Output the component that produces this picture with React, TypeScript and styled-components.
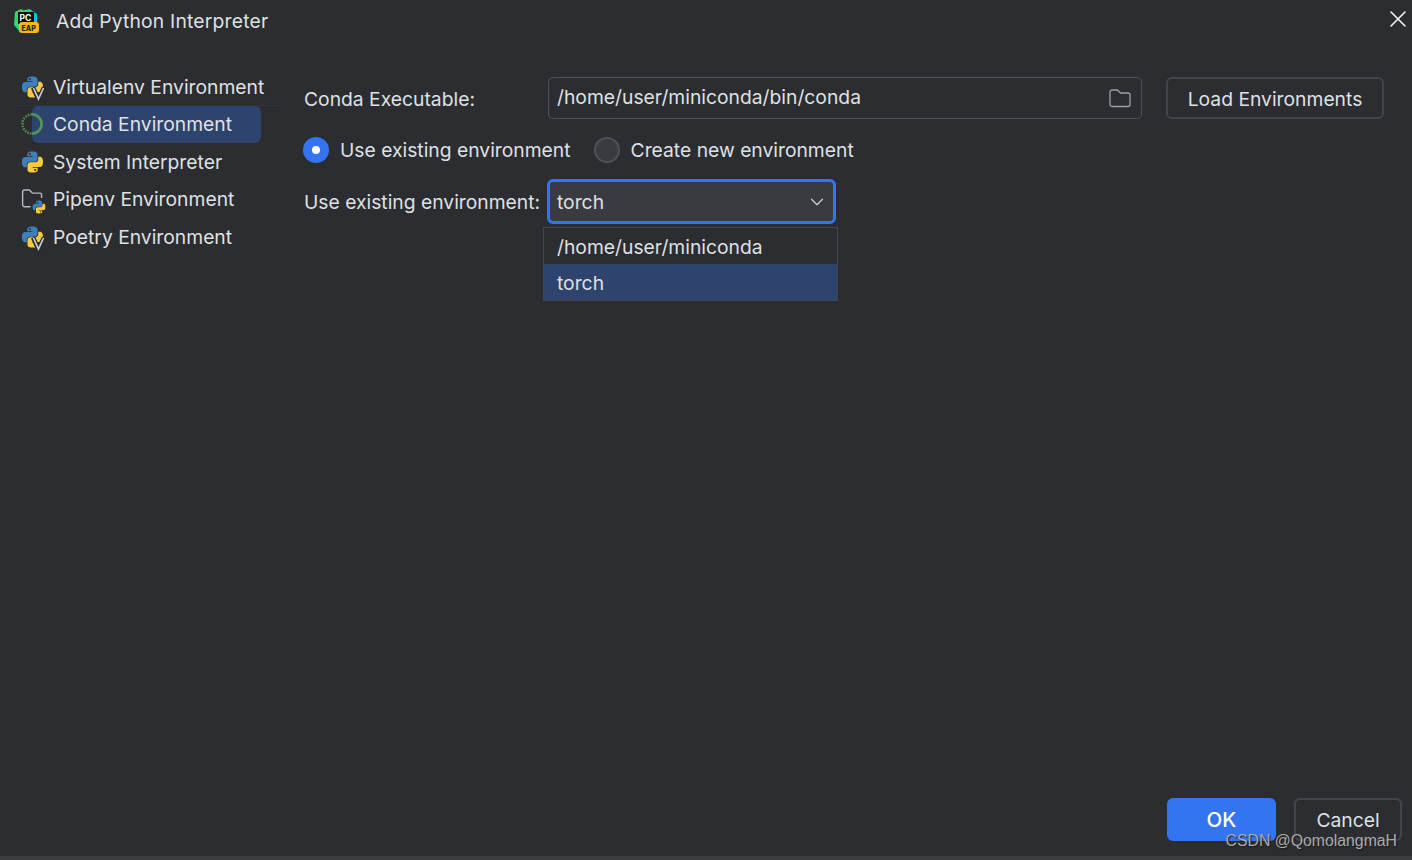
import React from "react";
import styled, { createGlobalStyle } from "styled-components";
import { X, ChevronDown } from "lucide-react";

const GlobalStyle = createGlobalStyle`
  html, body {
    margin: 0;
    padding: 0;
    background: #2b2d30;
  }
  * {
    box-sizing: border-box;
  }
`;

const Dialog = styled.div`
  position: relative;
  display: flex;
  flex-direction: column;
  width: 1412px;
  height: 860px;
  overflow: hidden;
  background: #2b2d30;
  color: #dfe1e5;
  font-family: Inter, "Noto Sans", sans-serif;
  font-size: 19.3px;
`;

const TitleBar = styled.div`
  display: flex;
  align-items: center;
  height: 42px;
  padding: 0 0 0 14px;
`;

const Title = styled.div`
  flex: 1;
  margin-left: 16px;
  letter-spacing: 0.2px;
  color: #dfe1e5;
`;

const CloseButton = styled.div`
  display: flex;
  margin-top: -4px;
  color: #f0f1f3;
`;

const Body = styled.div`
  flex: 1;
  display: flex;
  padding-top: 26px;
`;

const Sidebar = styled.div`
  width: 266px;
  margin: 0 14px;
  flex-shrink: 0;
`;

const SideRow = styled.div<{ $selected?: boolean; $divider?: boolean }>`
  position: relative;
  display: flex;
  align-items: center;
  gap: 9px;
  height: 37.5px;
  padding-left: 7px;
  padding-top: ${({ $divider }) => ($divider ? "1px" : "0")};
  border-bottom: ${({ $divider }) => ($divider ? "1px solid #33353a" : "none")};

  &::before {
    content: "";
    display: ${({ $selected }) => ($selected ? "block" : "none")};
    position: absolute;
    left: 18px;
    top: 0;
    width: 229px;
    height: 37.5px;
    border-radius: 6px;
    background: #2e436e;
  }

  > * {
    position: relative;
  }
`;

const IconBox = styled.span`
  position: relative;
  display: flex;
  width: 23px;
  height: 24px;
  flex-shrink: 0;
`;

const Content = styled.div`
  flex: 1;
  display: flex;
  flex-direction: column;
  padding: 9px 28px 0 10px;
`;

const Row = styled.div`
  display: flex;
  align-items: center;
`;

const FieldLabel = styled.div`
  width: 244px;
  flex-shrink: 0;
  white-space: nowrap;
`;

const ExecLabel = styled(FieldLabel)`
  padding-top: 2px;
`;

const PathField = styled.div`
  flex: 1;
  display: flex;
  align-items: center;
  justify-content: space-between;
  height: 42px;
  padding: 0 10px 2px 8px;
  border: 1px solid #4e5157;
  border-radius: 5px;
`;

const FolderButton = styled.span`
  display: flex;
  margin-top: 2px;
`;

const OutlineButton = styled.div`
  display: flex;
  align-items: center;
  justify-content: center;
  height: 42px;
  border: 2px solid #43454a;
  border-radius: 6px;
  color: #dfe1e5;
`;

const LoadButton = styled(OutlineButton)`
  width: 218px;
  margin-left: 24px;
  padding-top: 2px;
`;

const RadioRow = styled(Row)`
  height: 36px;
  margin-top: 13px;
  margin-left: -1px;
`;

const RadioMark = styled.span<{ $on?: boolean }>`
  display: flex;
  align-items: center;
  justify-content: center;
  width: 26px;
  height: 26px;
  border-radius: 50%;
  border: ${({ $on }) => ($on ? "none" : "2px solid #4e5157")};
  background: ${({ $on }) => ($on ? "#3574f0" : "#393b40")};

  &::after {
    content: "";
    display: ${({ $on }) => ($on ? "block" : "none")};
    width: 8px;
    height: 8px;
    border-radius: 50%;
    background: #ffffff;
  }
`;

const RadioText = styled.span`
  margin-left: 11px;
  margin-right: 23px;
`;

const ComboRow = styled(Row)`
  margin-top: 11px;
`;

const Combo = styled.div`
  position: relative;
  display: flex;
  align-items: center;
  justify-content: space-between;
  width: 289px;
  height: 45px;
  margin-left: -1px;
  padding: 1px 5px 0 7px;
  border: 3px solid #3574f0;
  border-radius: 6px;
  background: #393b40;
`;

const ComboArrow = styled.span`
  display: flex;
  color: #ced0d6;
`;

const Popup = styled.div`
  position: absolute;
  left: -7px;
  top: 45px;
  width: 295px;
  background: #2b2d30;
  border: 1px solid #43454a;
  z-index: 2;
`;

const PopupItem = styled.div<{ $active?: boolean }>`
  display: flex;
  align-items: center;
  height: 36px;
  padding: 2px 0 0 13px;
  background: ${({ $active }) => ($active ? "#2e436e" : "transparent")};
`;

const Footer = styled.div`
  display: flex;
  justify-content: flex-end;
  gap: 18px;
  padding: 0 10px 15px 0;
  border-bottom: 4px solid #3a3c40;
`;

const OkButton = styled.div`
  display: flex;
  align-items: center;
  justify-content: center;
  width: 109px;
  height: 43px;
  border-radius: 6px;
  background: #3574f0;
  color: #ffffff;
  font-size: 20.5px;
  font-weight: 500;
`;

const CancelButton = styled(OutlineButton)`
  width: 108px;
  height: 43px;
`;

const Watermark = styled.div`
  position: absolute;
  right: 15px;
  bottom: 10px;
  font-family: "Liberation Sans", Arial, sans-serif;
  font-size: 15.8px;
  color: #a9abad;
  text-shadow: 1px 1px 1px #1c1d20;
  z-index: 3;
`;

const PipenvBadge = styled.span`
  position: absolute;
  right: -2px;
  bottom: -3px;
  display: flex;
`;

const VBadge = styled.svg`
  position: absolute;
  right: -2px;
  bottom: -2px;
`;

const PcLabel = styled.text`
  font-family: Inter, sans-serif;
  font-size: 8.5px;
  font-weight: 700;
  fill: #ffffff;
`;

const EapLabel = styled.text`
  font-family: Inter, sans-serif;
  font-size: 7px;
  font-weight: 800;
  fill: #1f1f1f;
`;

const PYTHON_HALF =
  "M11.9 1C6.3 1 6.6 3.4 6.6 3.4v2.5h5.4v.8H4.5S1 6.3 1 12s3.1 5.5 3.1 5.5H6v-2.7s-.1-3.1 3-3.1h5.3s2.9 0 2.9-2.8V4S17.7 1 11.9 1zM8.9 2.700a1 1 0 1 1 0 1.900 1 1 0 0 1 0-1.900z";

const PythonLogo = ({ size = 24 }: { size?: number }) => (
  <svg width={size} height={size} viewBox="0 0 24 24">
    <path d={PYTHON_HALF} fill="#3d7fb8" fillRule="evenodd" />
    <path d={PYTHON_HALF} fill="#f7c93e" fillRule="evenodd" transform="rotate(180 12 12)" />
  </svg>
);

const VenvIcon = () => (
  <IconBox>
    <PythonLogo />
    <VBadge width="15" height="15" viewBox="0 0 15 15">
      <path d="M2 1.500l5.500 12 5.500-12" fill="none" stroke="#2b2d30" strokeWidth="4.500" />
      <path d="M2.500 2l5 11 5-11" fill="none" stroke="#ced0d6" strokeWidth="1.600" />
    </VBadge>
  </IconBox>
);

const CondaIcon = () => (
  <IconBox>
    <svg width="24" height="24" viewBox="0 0 24 24">
      <path d="M11.500 2a10 10 0 0 1 0 20" fill="none" stroke="#4f9459" strokeWidth="2.800" />
      <path
        d="M11.500 2a10 10 0 0 0 0 20"
        fill="none"
        stroke="#4f9459"
        strokeWidth="2.600"
        strokeDasharray="1.600 1.300"
      />
    </svg>
  </IconBox>
);

const PipenvIcon = () => (
  <IconBox>
    <svg width="24" height="24" viewBox="0 0 24 24">
      <path
        d="M10 20H3.500A1.800 1.800 0 0 1 1.700 18.200V4.500A1.800 1.800 0 0 1 3.500 2.700h5.300l3.200 3.200h7.700a1.800 1.800 0 0 1 1.800 1.800v3.300"
        fill="none"
        stroke="#b4b8bf"
        strokeWidth="1.500"
      />
    </svg>
    <PipenvBadge>
      <PythonLogo size={14} />
    </PipenvBadge>
  </IconBox>
);

const AppLogo = () => (
  <svg width="26" height="26" viewBox="0 0 26 26">
    <path d="M1 4l15-3 4 5-1 16-13 2L0 17z" fill="#21d789" />
    <path d="M17 2l6 4 0 9-4 0z" fill="#07c3f2" />
    <path d="M1 4l6-3 5 3-8 15-3-2z" fill="#3bd46a" />
    <rect x="4" y="4" width="16" height="12" fill="#0a0a0a" />
    <PcLabel x="5.500" y="13">
      PC
    </PcLabel>
    <rect x="5" y="14" width="20" height="11" rx="3" fill="#fcb316" />
    <EapLabel x="7.500" y="22.500">
      EAP
    </EapLabel>
  </svg>
);

const FolderIcon = () => (
  <svg width="22" height="20" viewBox="0 0 22 20">
    <path
      d="M3 2h5.500l3 3H19a2 2 0 0 1 2 2v9.500a2 2 0 0 1-2 2H3a2 2 0 0 1-2-2V4a2 2 0 0 1 2-2z"
      fill="none"
      stroke="#9da0a8"
      strokeWidth="1.300"
    />
  </svg>
);

const App = () => {
  return (
    <Dialog>
      <GlobalStyle />
      <TitleBar>
        <AppLogo />
        <Title>Add Python Interpreter</Title>
        <CloseButton>
          <X size={28} strokeWidth={1.4} />
        </CloseButton>
      </TitleBar>
      <Body>
        <Sidebar>
          <SideRow $divider>
            <VenvIcon />
            <span>Virtualenv Environment</span>
          </SideRow>
          <SideRow $selected>
            <CondaIcon />
            <span>Conda Environment</span>
          </SideRow>
          <SideRow>
            <IconBox>
              <PythonLogo />
            </IconBox>
            <span>System Interpreter</span>
          </SideRow>
          <SideRow>
            <PipenvIcon />
            <span>Pipenv Environment</span>
          </SideRow>
          <SideRow>
            <VenvIcon />
            <span>Poetry Environment</span>
          </SideRow>
        </Sidebar>
        <Content>
          <Row>
            <ExecLabel>Conda Executable:</ExecLabel>
            <PathField>
              <span>/home/user/miniconda/bin/conda</span>
              <FolderButton>
                <FolderIcon />
              </FolderButton>
            </PathField>
            <LoadButton>Load Environments</LoadButton>
          </Row>
          <RadioRow>
            <RadioMark $on />
            <RadioText>Use existing environment</RadioText>
            <RadioMark />
            <RadioText>Create new environment</RadioText>
          </RadioRow>
          <ComboRow>
            <FieldLabel>Use existing environment:</FieldLabel>
            <Combo>
              <span>torch</span>
              <ComboArrow>
                <ChevronDown size={22} strokeWidth={1.3} />
              </ComboArrow>
              <Popup>
                <PopupItem>/home/user/miniconda</PopupItem>
                <PopupItem $active>torch</PopupItem>
              </Popup>
            </Combo>
          </ComboRow>
        </Content>
      </Body>
      <Footer>
        <OkButton>OK</OkButton>
        <CancelButton>Cancel</CancelButton>
      </Footer>
      <Watermark>CSDN @QomolangmaH</Watermark>
    </Dialog>
  );
};

export default App;
